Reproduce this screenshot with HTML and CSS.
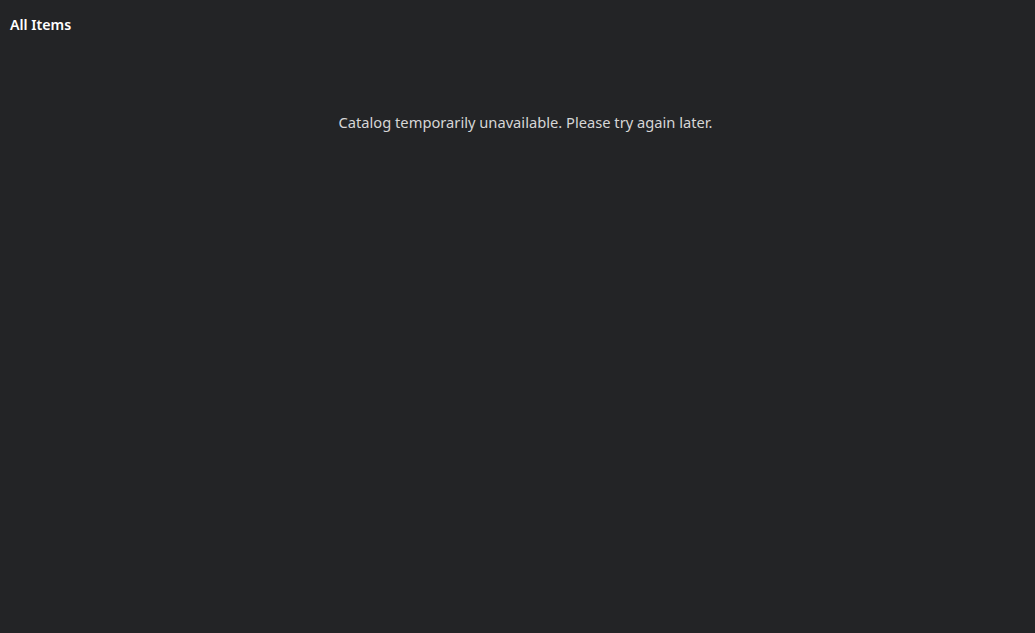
FILE: index.html
```html
<!DOCTYPE html>
<html lang="en">
<head>
<meta charset="utf-8">
<title>All Items</title>
<link rel="stylesheet" href="styles.css">
</head>
<body>
<header class="page-header">
  <h1 class="page-title">All Items</h1>
</header>
<main class="catalog">
  <p class="catalog-message">Catalog temporarily unavailable. Please try again later.</p>
</main>
</body>
</html>
```

FILE: styles.css
```css
html, body {
  margin: 0;
  padding: 0;
  height: 100%;
  background: #232426;
}
body {
  font-family: "Noto Sans", "Open Sans", sans-serif;
  color: #d4d4d4;
}
.page-header {
  padding: 14px 10px 0;
}
.page-title {
  margin: 0;
  font-size: 14.2px;
  font-weight: 600;
  color: #ffffff;
  line-height: 22px;
}
.catalog {
  display: flex;
  justify-content: center;
  padding-top: 75px;
  padding-left: 16px;
}
.catalog-message {
  margin: 0;
  font-size: 14.7px;
  line-height: 22px;
  color: #d6d6d6;
}
```
